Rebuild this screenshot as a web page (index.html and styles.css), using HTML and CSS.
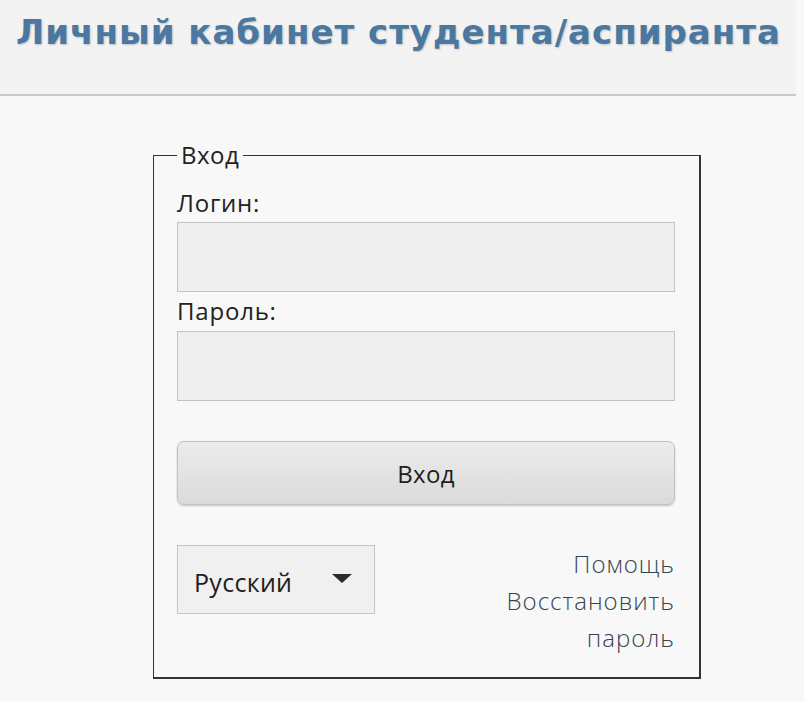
FILE: index.html
```html
<!DOCTYPE html>
<html lang="ru">
<head>
<meta charset="utf-8">
<title>Личный кабинет студента/аспиранта</title>
<link rel="stylesheet" href="styles.css">
</head>
<body>
<header class="header">
  <h1 class="title">Личный кабинет студента/аспиранта</h1>
</header>
<main class="main">
  <fieldset class="login">
    <legend class="legend">Вход</legend>
    <label class="label" for="login">Логин:</label>
    <input class="field" id="login" type="text">
    <label class="label label-pass" for="pass">Пароль:</label>
    <input class="field" id="pass" type="password">
    <button class="submit" type="button">Вход</button>
    <div class="bottom">
      <div class="lang">
        <span class="lang-text">Русский</span>
        <span class="lang-arrow"></span>
      </div>
      <div class="links">
        <a class="link" href="#">Помощь</a>
        <a class="link" href="#">Восстановить<br>пароль</a>
      </div>
    </div>
  </fieldset>
</main>
</body>
</html>
```
FILE: styles.css
```css
html, body {
  margin: 0;
  padding: 0;
}
body {
  background: #f8f8f8;
  font-family: "Open Sans", "Noto Sans", sans-serif;
  color: #222;
  width: 804px;
  height: 702px;
  overflow: hidden;
}
.header {
  width: 796px;
  height: 94px;
  background: #f3f3f3;
  border-bottom: 2px solid #c9c9c9;
  box-sizing: content-box;
}
.title {
  margin: 0;
  padding: 12px 0 0 16px;
  font-family: "DejaVu Sans", sans-serif;
  font-weight: bold;
  font-size: 34px;
  line-height: 40px;
  color: #4a78a1;
  letter-spacing: 1px;
  text-shadow: 1px 1px 2px rgba(0, 0, 0, 0.2);
  white-space: nowrap;
}
.main {
  padding: 46px 0 0 153px;
}
.login {
  width: 545px;
  margin: 0;
  box-sizing: border-box;
  border: 1px solid #333;
  border-right-width: 2px;
  border-bottom-width: 2px;
  padding: 21px 24px 21px 23px;
  display: flex;
  flex-direction: column;
}
.legend {
  padding: 0 4px;
  font-size: 24px;
  line-height: 26px;
  letter-spacing: 0.5px;
  color: #222;
}
.label {
  display: block;
  font-size: 24px;
  line-height: 28px;
  letter-spacing: 0.8px;
  color: #222;
}
.label-pass {
  margin-top: 5px;
}
.field {
  display: block;
  box-sizing: border-box;
  width: 498px;
  height: 70px;
  margin: 5px 0 0;
  background: #efefef;
  border: 1px solid #c3c3c3;
  border-radius: 0;
  padding: 0 10px;
  font-size: 22px;
  font-family: inherit;
}
.label-pass + .field {
  margin-top: 6px;
}
.submit {
  display: block;
  box-sizing: border-box;
  width: 498px;
  height: 64px;
  margin-top: 40px;
  border: 1px solid #c1c1c1;
  border-radius: 7px;
  background: linear-gradient(#ececec, #dadada);
  box-shadow: 0 1px 2px rgba(0, 0, 0, 0.22);
  font-family: inherit;
  font-size: 24px;
  letter-spacing: 0.3px;
  color: #1e1e1e;
  padding: 0;
}
.bottom {
  display: flex;
  justify-content: space-between;
  align-items: flex-start;
  width: 498px;
  margin-top: 40px;
}
.lang {
  box-sizing: border-box;
  width: 198px;
  height: 69px;
  background: #f0f0f0;
  border: 1px solid #c3c3c3;
  display: flex;
  align-items: center;
  padding: 4px 22px 0 16px;
  justify-content: space-between;
}
.lang-text {
  font-size: 25px;
  line-height: 30px;
  letter-spacing: 0.3px;
  color: #1e1e1e;
}
.lang-arrow {
  width: 0;
  height: 0;
  border-left: 10px solid transparent;
  border-right: 10px solid transparent;
  border-top: 9px solid #2a2a2a;
  margin-bottom: 6px;
}
.links {
  display: flex;
  flex-direction: column;
  align-items: flex-end;
  text-align: right;
  margin-top: 0;
}
.link {
  font-size: 24px;
  line-height: 37px;
  font-weight: 300;
  letter-spacing: 1px;
  color: #36444f;
  text-decoration: none;
}
```
